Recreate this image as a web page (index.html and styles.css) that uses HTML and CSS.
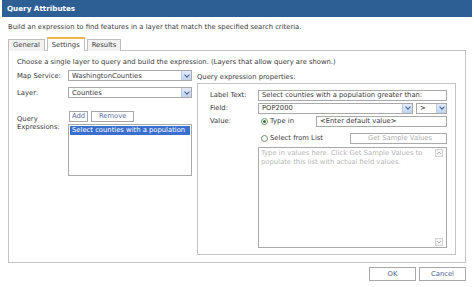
FILE: index.html
```html
<!DOCTYPE html>
<html lang="en">
<head>
  <meta charset="UTF-8">
  <title>Query Attributes</title>
  <link rel="stylesheet" href="styles.css">
</head>
<body>
  <div class="titlebar">Query Attributes</div>
  <div class="intro">Build an expression to find features in a layer that match the specified search criteria.</div>

  <div class="tabs">
    <div class="tab">General</div>
    <div class="tab active">Settings</div>
    <div class="tab">Results</div>
  </div>

  <div class="panel">
    <div class="hint">Choose a single layer to query and build the expression. (Layers that allow query are shown.)</div>
    <div class="cols">
      <div class="left">
        <div class="row">
          <span class="lbl">Map Service:</span>
          <div class="select w124"><span>WashingtonCounties</span><i class="arrow"></i></div>
        </div>
        <div class="row">
          <span class="lbl">Layer:</span>
          <div class="select w124"><span>Counties</span><i class="arrow"></i></div>
        </div>
        <div class="row expr">
          <span class="lbl">Query<br>Expressions:</span>
          <div class="exprbox">
            <div class="btns">
              <button class="sbtn">Add</button>
              <button class="sbtn wide">Remove</button>
            </div>
            <div class="list">
              <div class="item sel">Select counties with a population</div>
            </div>
          </div>
        </div>
      </div>

      <div class="right">
        <div class="caption">Query expression properties:</div>
        <div class="props">
          <div class="prow">
            <span class="plbl">Label Text:</span>
            <div class="input grow">Select counties with a population greater than:</div>
          </div>
          <div class="prow">
            <span class="plbl">Field:</span>
            <div class="select field"><span>POP2000</span><i class="arrow"></i></div>
            <div class="select op"><span>&gt;</span><i class="arrow"></i></div>
          </div>
          <div class="prow">
            <span class="plbl">Value:</span>
            <label class="radio on"><i></i>Type in</label>
            <div class="input grow">&lt;Enter default value&gt;</div>
          </div>
          <div class="prow list-row">
            <span class="plbl"></span>
            <label class="radio long"><i></i>Select from List</label>
            <div class="input samples">Get Sample Values</div>
          </div>
          <div class="prow">
            <span class="plbl"></span>
            <div class="area">
              <div class="ph">Type in values here. Click Get Sample Values to populate this list with actual field values.</div>
              <div class="scroll">
                <svg width="8" height="8" viewBox="0 0 8 8"><rect x="0.5" y="0.5" width="7" height="7" fill="#f4f4f4" stroke="#d4d4d4"/><path d="M2 5 L4 3 L6 5" fill="none" stroke="#b8b8b8" stroke-width="1"/></svg>
                <svg width="8" height="8" viewBox="0 0 8 8"><rect x="0.5" y="0.5" width="7" height="7" fill="#f4f4f4" stroke="#d4d4d4"/><path d="M2 3 L4 5 L6 3" fill="none" stroke="#b8b8b8" stroke-width="1"/></svg>
              </div>
            </div>
          </div>
        </div>
      </div>
    </div>
  </div>

  <div class="footer">
    <button class="fbtn">OK</button>
    <button class="fbtn">Cancel</button>
  </div>
</body>
</html>
```

FILE: styles.css
```css
body { margin: 0; background: #fff; font-family: "DejaVu Sans", Verdana, sans-serif; font-size: 6.8px; color: #3a3a3a; width: 474px; height: 287px; overflow: hidden; }
.titlebar { margin: 0 2px; height: 17px; background: #2d5f95; color: #fff; font-weight: bold; font-size: 7.2px; line-height: 17px; padding-left: 5px; }
.intro { padding: 6px 8px 0; height: 15px; line-height: 9px; }
.tabs { display: flex; gap: 2px; margin-left: 8px; height: 12px; position: relative; z-index: 1; }
.tab { border: 1px solid #bdbdbd; border-bottom: none; background: #f2f2f2; padding: 0 4px; line-height: 11px; height: 11px; margin-top: 1px; }
.tab.active { background: #fff; border-top: 2px solid #f2b24a; height: 12px; margin-top: -1px; line-height: 12px; }
.panel { margin: 0 8px; border: 1px solid #c4c4c4; height: 213px; box-sizing: border-box; padding: 7px 8px 0 8px; }
.hint { line-height: 9px; height: 12px; }
.cols { display: flex; gap: 5px; }
.left { width: 175px; }
.row { display: flex; align-items: center; height: 11px; margin-bottom: 6px; }
.lbl { width: 51px; flex: none; line-height: 8px; }
.select { border: 1px solid #a9a9a9; height: 11px; box-sizing: border-box; display: flex; align-items: center; justify-content: space-between; padding-left: 3px; background: #fff; }
.w124 { width: 124px; }
.arrow { width: 9px; height: 9px; background: linear-gradient(#e3ebf9, #c3d3ef); border-left: 1px solid #b8c8e6; position: relative; }
.arrow::after { content: ""; position: absolute; left: 2.5px; top: 1.5px; width: 3px; height: 3px; border-right: 1.3px solid #3d5f9e; border-bottom: 1.3px solid #3d5f9e; transform: rotate(45deg); }
.row.expr { align-items: flex-start; height: auto; margin-top: 13px; }
.row.expr .lbl { margin-top: 4px; }
.exprbox { width: 124px; }
.btns { display: flex; gap: 3px; margin-left: 1px; height: 12px; margin-bottom: 1px; }
.sbtn { font: inherit; color: #5a6f9a; background: #fff; border: 1px solid #a8a8a8; height: 11px; padding: 0 2px; line-height: 9px; }
.sbtn.wide { width: 43px; }
.list { border: 1px solid #a9a9a9; height: 52px; box-sizing: border-box; padding: 1px; }
.item { line-height: 9px; padding-left: 2px; }
.item.sel { background: #3a6fd0; color: #fff; }
.right { flex: 1; padding-top: 3px; }
.caption { line-height: 9px; height: 10px; }
.props { border: 1px solid #c4c4c4; width: 259px; height: 172px; box-sizing: border-box; padding: 6px 8px 0 12px; }
.prow { display: flex; align-items: center; gap: 3px; height: 10px; margin-bottom: 3px; }
.plbl { width: 45px; flex: none; }
.input { border: 1px solid #a9a9a9; height: 11px; box-sizing: border-box; line-height: 9px; padding-left: 3px; white-space: nowrap; overflow: hidden; }
.grow { flex: 1; }
.field { width: 155px; }
.op { width: 31px; }
.radio { display: flex; align-items: center; gap: 2px; width: 52px; flex: none; padding-left: 3px; white-space: nowrap; }
.radio.long { width: 86px; }
.radio i { width: 7px; height: 7px; border: 1px solid #6f8e75; border-radius: 50%; box-sizing: border-box; display: inline-flex; align-items: center; justify-content: center; }
.radio.on i::after { content: ""; width: 3px; height: 3px; border-radius: 50%; background: #2f7a2f; }
.samples { flex: 1; color: #b0b0b0; text-align: center; }
.list-row { margin-top: 7px; margin-bottom: 4px; }
.prow:last-child { height: auto; align-items: flex-start; }
.area { flex: 1; border: 1px solid #a9a9a9; height: 101px; box-sizing: border-box; display: flex; }
.ph { flex: 1; color: #b6b6b6; line-height: 9px; padding: 1px 2px; }
.scroll { width: 10px; display: flex; flex-direction: column; justify-content: space-between; padding: 1px 1px 1px 0; }
.footer { display: flex; justify-content: flex-end; gap: 3px; padding: 4px 8px 0 0; }
.fbtn { font: inherit; color: #4a5f8f; background: #fff; border: 1px solid #a8a8a8; width: 47px; height: 14px; padding: 0; }
```
